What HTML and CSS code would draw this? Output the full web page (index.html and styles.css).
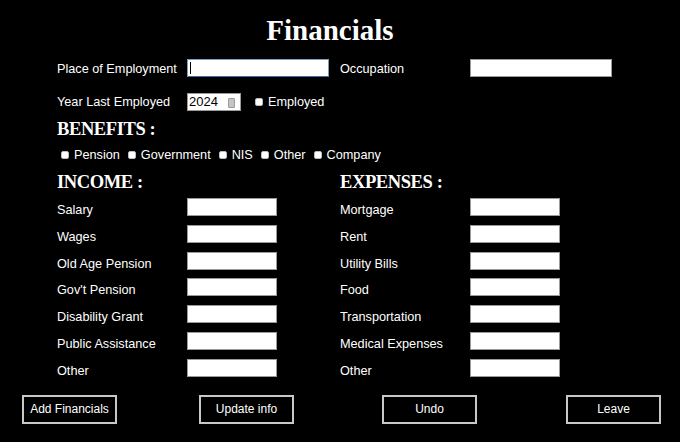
FILE: index.html
```html
<!DOCTYPE html>
<html>
<head>
<meta charset="utf-8">
<link rel="stylesheet" href="styles.css">
</head>
<body>
<div class="page">
  <h1 class="title">Financials</h1>

  <div class="top-grid">
    <span class="lbl">Place of Employment</span>
    <span class="field wide focused"><span class="caret"></span></span>
    <span class="lbl">Occupation</span>
    <span class="field wide"></span>

    <span class="lbl">Year Last Employed</span>
    <span class="year-cell">
      <span class="field num">2024<span class="spin"></span></span>
      <span class="check"><span class="box"></span>Employed</span>
    </span>
  </div>

  <h2 class="section">BENEFITS :</h2>
  <div class="checks">
    <span class="check"><span class="box"></span>Pension</span>
    <span class="check"><span class="box"></span>Government</span>
    <span class="check"><span class="box"></span>NIS</span>
    <span class="check"><span class="box"></span>Other</span>
    <span class="check"><span class="box"></span>Company</span>
  </div>

  <div class="columns">
    <div class="col">
      <h2 class="section col-head">INCOME :</h2>
      <div class="rows">
        <span class="lbl">Salary</span><span class="field small"></span>
        <span class="lbl">Wages</span><span class="field small"></span>
        <span class="lbl">Old Age Pension</span><span class="field small"></span>
        <span class="lbl">Gov't Pension</span><span class="field small"></span>
        <span class="lbl">Disability Grant</span><span class="field small"></span>
        <span class="lbl">Public Assistance</span><span class="field small"></span>
        <span class="lbl">Other</span><span class="field small"></span>
      </div>
    </div>
    <div class="col">
      <h2 class="section col-head">EXPENSES :</h2>
      <div class="rows">
        <span class="lbl">Mortgage</span><span class="field small"></span>
        <span class="lbl">Rent</span><span class="field small"></span>
        <span class="lbl">Utility Bills</span><span class="field small"></span>
        <span class="lbl">Food</span><span class="field small"></span>
        <span class="lbl">Transportation</span><span class="field small"></span>
        <span class="lbl">Medical Expenses</span><span class="field small"></span>
        <span class="lbl">Other</span><span class="field small"></span>
      </div>
    </div>
  </div>

  <div class="buttons">
    <span class="btn">Add Financials</span>
    <span class="btn">Update info</span>
    <span class="btn">Undo</span>
    <span class="btn">Leave</span>
  </div>
</div>
</body>
</html>
```

FILE: styles.css
```css
html, body {
  margin: 0;
  padding: 0;
  background: #000;
}
body {
  width: 680px;
  height: 442px;
  overflow: hidden;
  font-family: "Liberation Sans", Arial, sans-serif;
  color: #fff;
}
.page {
  padding-top: 14px;
}
.title {
  margin: 0;
  text-align: center;
  font-family: "Liberation Serif", "Times New Roman", serif;
  font-weight: bold;
  font-size: 29px;
  line-height: 32px;
  height: 32px;
  padding-right: 20px;
}
.top-grid {
  display: grid;
  grid-template-columns: 130px 153px 130px 142px;
  grid-auto-rows: 18px;
  row-gap: 15px;
  align-items: center;
  margin-top: 13px;
  padding-left: 57px;
}
.top-grid > .lbl {
  position: relative;
  top: 1px;
}
.top-grid > :nth-child(n+5) {
  position: relative;
  top: 1px;
}
.lbl {
  font-size: 12.7px;
  line-height: 18px;
  white-space: nowrap;
}
.field {
  display: block;
  box-sizing: border-box;
  height: 18px;
  background: #fff;
  border: 1px solid #9a9a9a;
  position: relative;
}
.field.wide {
  width: 142px;
}
.field.focused {
  border-color: #7a9cc0;
  border-bottom: 1px solid #3a6ea5;
}
.caret {
  position: absolute;
  left: 2px;
  top: 2px;
  width: 1px;
  height: 12px;
  background: #000;
}
.year-cell {
  grid-column: 2 / span 3;
  display: flex;
  align-items: center;
  gap: 14px;
}
.field.num {
  width: 54px;
  height: 18px;
  color: #000;
  font-size: 13px;
  line-height: 16px;
  padding-left: 1px;
}
.spin {
  position: absolute;
  right: 5px;
  top: 4px;
  width: 5px;
  height: 8px;
  background: #c4c4c4;
  border: 1px solid #9a9a9a;
  border-radius: 1px;
}
.check {
  display: inline-flex;
  align-items: center;
  font-size: 12.7px;
  line-height: 18px;
  white-space: nowrap;
}
.box {
  display: inline-block;
  width: 6px;
  height: 6px;
  background: #fff;
  border: 1px solid #bbb;
  border-radius: 2px;
  margin-right: 5px;
}
.section {
  margin: 0;
  font-family: "Liberation Serif", "Times New Roman", serif;
  font-weight: bold;
  font-size: 18.5px;
  line-height: 20px;
  letter-spacing: -0.4px;
}
.page > .section {
  margin-top: 9px;
  padding-left: 57px;
}
.checks {
  display: flex;
  gap: 8px;
  padding-left: 61px;
  margin-top: 7px;
}
.columns {
  display: grid;
  grid-template-columns: 283px 283px;
  padding-left: 57px;
  margin-top: 8px;
}
.col-head {
  height: 20px;
}
.rows {
  display: grid;
  grid-template-columns: 130px 90px;
  grid-auto-rows: 18px;
  row-gap: 8.8px;
  align-items: center;
  margin-top: 6px;
}
.rows > .lbl {
  position: relative;
  top: 3px;
}
.field.small {
  width: 90px;
}
.buttons {
  display: grid;
  grid-template-columns: 177px 183px 184px 95px;
  padding-left: 22px;
  margin-top: 18px;
}
.btn {
  box-sizing: border-box;
  width: 95px;
  height: 29px;
  border: 2px solid #c8c8c8;
  display: flex;
  align-items: center;
  justify-content: center;
  font-size: 12px;
  color: #fff;
}
```
